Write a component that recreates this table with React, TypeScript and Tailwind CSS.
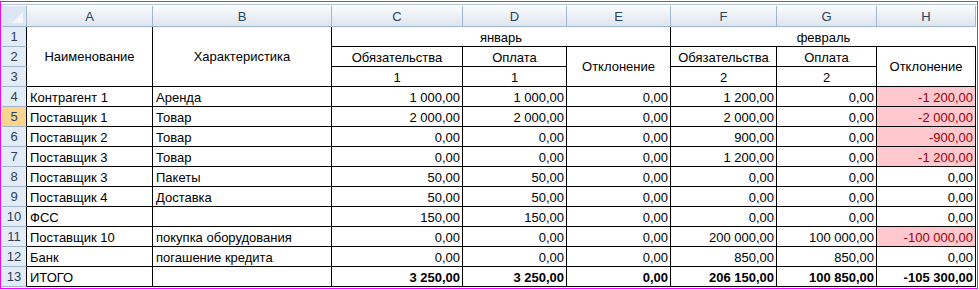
import React from 'react';

type Row = {
  n: number;
  name: string;
  kind: string;
  vals: string[];
  neg?: boolean;
  total?: boolean;
};

const rows: Row[] = [
  { n: 4, name: 'Контрагент 1', kind: 'Аренда', vals: ['1 000,00', '1 000,00', '0,00', '1 200,00', '0,00', '-1 200,00'], neg: true },
  { n: 5, name: 'Поставщик 1', kind: 'Товар', vals: ['2 000,00', '2 000,00', '0,00', '2 000,00', '0,00', '-2 000,00'], neg: true },
  { n: 6, name: 'Поставщик 2', kind: 'Товар', vals: ['0,00', '0,00', '0,00', '900,00', '0,00', '-900,00'], neg: true },
  { n: 7, name: 'Поставщик 3', kind: 'Товар', vals: ['0,00', '0,00', '0,00', '1 200,00', '0,00', '-1 200,00'], neg: true },
  { n: 8, name: 'Поставщик 3', kind: 'Пакеты', vals: ['50,00', '50,00', '0,00', '0,00', '0,00', '0,00'] },
  { n: 9, name: 'Поставщик 4', kind: 'Доставка', vals: ['50,00', '50,00', '0,00', '0,00', '0,00', '0,00'] },
  { n: 10, name: 'ФСС', kind: '', vals: ['150,00', '150,00', '0,00', '0,00', '0,00', '0,00'] },
  { n: 11, name: 'Поставщик 10', kind: 'покупка оборудования', vals: ['0,00', '0,00', '0,00', '200 000,00', '100 000,00', '-100 000,00'], neg: true },
  { n: 12, name: 'Банк', kind: 'погашение кредита', vals: ['0,00', '0,00', '0,00', '850,00', '850,00', '0,00'] },
  { n: 13, name: 'ИТОГО', kind: '', vals: ['3 250,00', '3 250,00', '0,00', '206 150,00', '100 850,00', '-105 300,00'], total: true },
];

const cols = 'grid grid-cols-[25px_126px_179px_131px_104px_104px_106px_100px_99px]';
const letters = ['A', 'B', 'C', 'D', 'E', 'F', 'G', 'H'];

// номер строки слева
function RowNum({ n, active }: { n: number; active?: boolean }) {
  return (
    <div
      className={`flex items-center justify-center border-r border-r-black border-b border-b-[#9eb6ce] text-[#27415f] ${
        active ? 'bg-[#fcd48e]' : 'bg-[#e4ecf7]'
      }`}
    >
      {n}
    </div>
  );
}

export default function App() {
  return (
    <div className="w-[979px] h-[290px] bg-white overflow-hidden font-['Liberation_Sans',Arial,sans-serif] text-[13px] leading-[15px] text-black">
      <div className="mt-px w-[978px] h-[288px] border border-[#ff00ff] pl-px">
        <div className="h-[2px]" />
        <div className="h-px bg-[#b4c2d6] mr-px" />
        <div className="h-px" />

        {/* буквы колонок */}
        <div className={`${cols} h-[21px]`}>
          <div className="relative bg-[#dce6f4] border-r border-b border-[#9eb6ce]">
            <svg className="absolute right-[3px] bottom-[3px]" width="11" height="11" viewBox="0 0 11 11">
              <polygon points="11,0 11,11 0,11" fill="#f3f6fb" />
            </svg>
          </div>
          {letters.map((l) => (
            <div
              key={l}
              className="flex items-center justify-center bg-gradient-to-b from-[#f9fbfd] to-[#dfe6ef] border-r border-b border-[#9eb6ce] text-[#27415f]"
            >
              {l}
            </div>
          ))}
        </div>

        {/* шапка таблицы, строки 1-3 */}
        <div className={`${cols} grid-rows-[20px_20px_20px]`}>
          <div className="col-start-1 row-start-1"><RowNumCell n={1} /></div>
          <div className="col-start-1 row-start-2"><RowNumCell n={2} /></div>
          <div className="col-start-1 row-start-3"><RowNumCell n={3} /></div>

          <div className="col-start-2 row-start-1 row-span-3 flex items-center justify-center border-r border-b border-black">
            Наименование
          </div>
          <div className="col-start-3 row-start-1 row-span-3 flex items-center justify-center border-r border-b border-black">
            Характеристика
          </div>

          <div className="col-start-4 col-span-3 row-start-1 flex items-end justify-center pb-px border-r border-b border-black">
            январь
          </div>
          <div className="col-start-4 row-start-2 flex items-end justify-center pb-px border-r border-b border-black">
            Обязательства
          </div>
          <div className="col-start-5 row-start-2 flex items-end justify-center pb-px border-r border-b border-black">
            Оплата
          </div>
          <div className="col-start-6 row-start-2 row-span-2 flex items-center justify-center border-r border-b border-black">
            Отклонение
          </div>
          <div className="col-start-4 row-start-3 flex items-end justify-center pb-px border-r border-b border-black">1</div>
          <div className="col-start-5 row-start-3 flex items-end justify-center pb-px border-r border-b border-black">1</div>

          <div className="col-start-7 col-span-3 row-start-1 flex items-end justify-center pb-px border-b border-black">
            февраль
          </div>
          <div className="col-start-7 row-start-2 flex items-end justify-center pb-px border-r border-b border-black">
            Обязательства
          </div>
          <div className="col-start-8 row-start-2 flex items-end justify-center pb-px border-r border-b border-black">
            Оплата
          </div>
          <div className="col-start-9 row-start-2 row-span-2 flex items-center justify-center border-r border-b border-black">
            Отклонение
          </div>
          <div className="col-start-7 row-start-3 flex items-end justify-center pb-px border-r border-b border-black">2</div>
          <div className="col-start-8 row-start-3 flex items-end justify-center pb-px border-r border-b border-black">2</div>
        </div>

        {/* данные */}
        {rows.map((r) => (
          <div key={r.n} className={`${cols} h-[20px]`}>
            <RowNum n={r.n} active={r.n === 5} />
            <div className="flex items-end pb-px pl-[3px] border-r border-b border-black whitespace-nowrap">{r.name}</div>
            <div className="flex items-end pb-px pl-[3px] border-r border-b border-black whitespace-nowrap">{r.kind}</div>
            {r.vals.map((v, i) => {
              const pink = r.neg && i === 5;
              return (
                <div
                  key={i}
                  className={`flex items-end justify-end pb-px pr-[2px] border-r border-b border-black whitespace-nowrap ${
                    pink ? 'bg-[#ffc7ce] text-[#9c0006]' : ''
                  } ${r.total ? 'font-bold' : ''}`}
                >
                  {v}
                </div>
              );
            })}
          </div>
        ))}
      </div>
    </div>
  );
}

function RowNumCell({ n }: { n: number }) {
  return (
    <div className="h-full flex items-center justify-center border-r border-r-black border-b border-b-[#9eb6ce] bg-[#e4ecf7] text-[#27415f]">
      {n}
    </div>
  );
}
